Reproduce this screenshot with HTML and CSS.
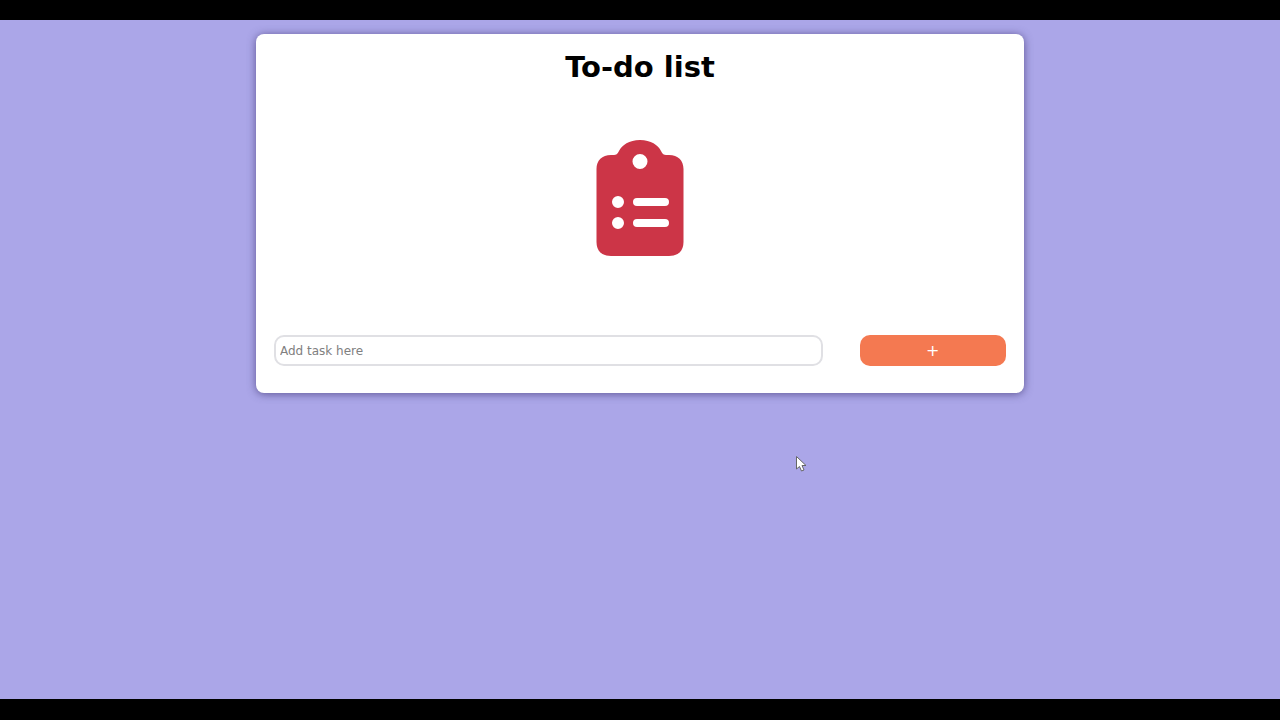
FILE: index.html
```html
<!DOCTYPE html>
<html>
<head>
<meta charset="utf-8"/>
<title>To-do list</title>
<link rel="stylesheet" href="styles.css">
</head>
<body>
<div class="bar"></div>
<div class="stage">
    <div class="card">
        <h1 class="title">To-do list</h1>
        <div class="logo">
            <svg width="88" height="118" viewBox="0 0 88 118">
                <path fill="#cc3547" fill-rule="evenodd" d="M44 1C33 1 26 6 23 12C21.500 15 20 16 18 16H15C6 16 0.500 21.500 0.500 30V103C0.500 112 6 117 15 117H73C82 117 87.500 112 87.500 103V30C87.500 21.500 82 16 73 16H70C68 16 66.500 15 65 12C62 6 55 1 44 1ZM44 15A7.500 7.500 0 1 1 44 30A7.500 7.500 0 1 1 44 15ZM22 57A6 6 0 1 1 22 69A6 6 0 1 1 22 57ZM41 59H69A4 4 0 0 1 69 67H41A4 4 0 0 1 41 59ZM22 78A6 6 0 1 1 22 90A6 6 0 1 1 22 78ZM41 80H69A4 4 0 0 1 69 88H41A4 4 0 0 1 41 80Z"/>
            </svg>
        </div>
        <div class="addRow">
            <input class="taskInput" type="text" placeholder="Add task here">
            <button class="addBtn" type="button">+</button>
        </div>
    </div>
    <svg class="cursor" width="12" height="18" viewBox="0 0 12 18">
        <path fill="#fff" stroke="#666" stroke-width="1" d="M0.500 1.500V14L3.500 11.500L5.500 16L8 15L6 10.500H10Z"/>
    </svg>
</div>
<div class="bar bottom"></div>
</body>
</html>
```

FILE: styles.css
```css
html, body { margin: 0; height: 100%; }
body { display: flex; flex-direction: column; background: #000; font-family: "DejaVu Sans", Verdana, sans-serif; }
.bar { height: 20px; background: #000; }
.bar.bottom { height: 21px; }
.stage { position: relative; flex: 1; padding-top: 14px; background: #aba6e8; }
.card { box-sizing: border-box; margin: 0 auto; padding: 15px 18px 26px; width: 768px; height: 359px; background: #fff; border-radius: 8px; box-shadow: 0 1px 8px rgba(60, 50, 110, 0.7); }
.title { margin: 0; font-size: 29px; line-height: 36px; font-weight: bold; text-align: center; color: #000; }
.logo { display: flex; justify-content: center; margin-top: 54px; height: 118px; }
.addRow { display: flex; justify-content: space-between; margin-top: 78px; }
.taskInput { box-sizing: border-box; padding: 0 4px; width: 549px; height: 31px; border: 2px solid #e0e0e4; border-radius: 10px; font-family: inherit; font-size: 12px; background: #fff; outline: none; }
.taskInput::placeholder { color: #808080; opacity: 1; }
.addBtn { width: 146.500px; height: 31px; border: 0; border-radius: 10px; background: #f47951; color: #fff; font-family: inherit; font-size: 16px; padding: 0; }
.cursor { position: absolute; left: 796px; top: 435px; }
```
